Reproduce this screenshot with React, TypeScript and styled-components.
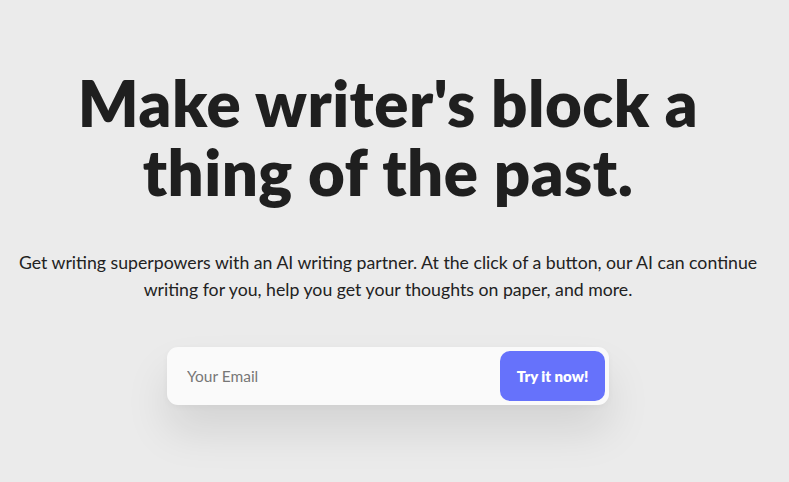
import React from "react";
import styled, { createGlobalStyle } from "styled-components";

const Global = createGlobalStyle`
  html, body { margin: 0; padding: 0; background: #ebebeb; }
  body { font-family: "Lato", "Noto Sans", sans-serif; color: #1f1f1f; }
  * { box-sizing: border-box; }
`;

const Page = styled.main`
  width: 776px;
  height: 482px;
  overflow: hidden;
  display: flex;
  flex-direction: column;
  align-items: center;
  padding-top: 68px;
  background: #ebebeb;
`;

const Heading = styled.h1`
  margin: 0;
  font-family: "Lato", sans-serif;
  font-weight: 800;
  font-size: 63.5px;
  line-height: 69px;
  letter-spacing: 0.5px;
  text-align: center;
  color: #1f1f1f;
  width: 700px;
`;

const Lead = styled.p`
  margin: 43px 0 0;
  font-family: "Lato", sans-serif;
  font-size: 17.7px;
  line-height: 27px;
  text-align: center;
  color: #222;
  width: 776px;
`;

const Form = styled.form`
  margin-top: 44px;
  width: 442px;
  height: 58px;
  padding: 4px;
  display: flex;
  align-items: stretch;
  background: #fafafa;
  border-radius: 11px;
  box-shadow: 0 26px 44px rgba(0, 0, 0, 0.1), 0 2px 6px rgba(0, 0, 0, 0.04);
`;

const EmailInput = styled.input`
  flex: 1;
  min-width: 0;
  border: none;
  outline: none;
  background: transparent;
  padding: 0 0 0 16px;
  font-family: "Lato", sans-serif;
  font-size: 15.5px;
  color: #333;
  &::placeholder { color: #777; }
`;

const Submit = styled.button`
  width: 105px;
  border: none;
  border-radius: 10px;
  background: #6672fb;
  color: #fff;
  font-family: "Lato", sans-serif;
  font-weight: 800;
  font-size: 15px;
  cursor: pointer;
`;

export default function App() {
  return (
    <>
      <Global />
      <Page>
        <Heading>Make writer's block a thing of the past.</Heading>
        <Lead>
          Get writing superpowers with an AI writing partner. At the click of a button, our AI can continue
          writing for you, help you get your thoughts on paper, and more.
        </Lead>
        <Form onSubmit={(e) => e.preventDefault()}>
          <EmailInput type="email" placeholder="Your Email" />
          <Submit type="submit">Try it now!</Submit>
        </Form>
      </Page>
    </>
  );
}
